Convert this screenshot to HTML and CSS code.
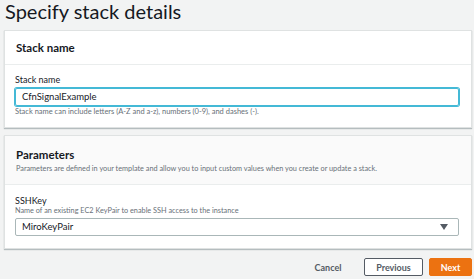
FILE: index.html
```html
<!DOCTYPE html>
<html>
<head>
<meta charset="utf-8">
<link rel="stylesheet" href="styles.css">
</head>
<body>
<h1 class="title">Specify stack details</h1>

<section class="card">
  <div class="card-head">
    <h2 class="card-title">Stack name</h2>
  </div>
  <div class="card-body body-one">
    <div class="label">Stack name</div>
    <div class="input focus">CfnSignalExample</div>
    <div class="hint">Stack name can include letters (A-Z and a-z), numbers (0-9), and dashes (-).</div>
  </div>
</section>

<section class="card card-two">
  <div class="card-head grey">
    <h2 class="card-title">Parameters</h2>
    <div class="hint head-hint">Parameters are defined in your template and allow you to input custom values when you create or update a stack.</div>
  </div>
  <div class="card-body body-two">
    <div class="label">SSHKey</div>
    <div class="hint desc">Name of an existing EC2 KeyPair to enable SSH access to the instance</div>
    <div class="input select">
      <span>MiroKeyPair</span>
      <svg class="caret" width="8" height="6" viewBox="0 0 8 6"><path d="M0 0 H8 L4 6 Z" fill="#545b64"/></svg>
    </div>
  </div>
</section>

<footer class="actions">
  <button class="btn link">Cancel</button>
  <button class="btn secondary">Previous</button>
  <button class="btn primary">Next</button>
</footer>
</body>
</html>
```

FILE: styles.css
```css
* { box-sizing: border-box; }
html, body { margin: 0; padding: 0; }
body {
  background: #f2f3f3;
  font-family: Lato, "Open Sans", sans-serif;
  color: #16191f;
  width: 474px;
  height: 279px;
  overflow: hidden;
}
.title {
  margin: 0;
  padding: 0 0 0 5px;
  font-weight: 400;
  font-size: 20px;
  line-height: 23px;
  height: 30px;
}
.card {
  margin: 0 2px 0 4px;
  background: #fff;
  border: 1px solid #dfe2e2;
  box-shadow: 0 1px 1px rgba(0,28,36,0.25);
}
.card-two { margin-top: 7px; }
.card-head {
  padding: 0 11px;
  border-bottom: 1px solid #eaeded;
  height: 34px;
  display: flex;
  flex-direction: column;
  justify-content: center;
}
.card-head.grey {
  background: #fafafa;
  height: 49px;
  padding-top: 2px;
}
.card-title {
  margin: 0;
  font-size: 11.5px;
  font-weight: 700;
  line-height: 14px;
}
.card-body { padding: 0 12px 0 10px; }
.body-one { padding-top: 9px; padding-bottom: 10px; }
.body-two { padding-top: 10px; padding-bottom: 12px; }
.label {
  font-size: 9px;
  line-height: 11px;
  font-weight: 400;
}
.hint {
  font-size: 7.5px;
  line-height: 10px;
  color: #687078;
}
.head-hint { margin-top: 2px; font-size: 7.3px; }
.body-one .label { margin-bottom: 3px; }
.body-one .hint { margin-top: 1px; }
.desc { margin-bottom: 2px; font-size: 7.3px; }
.input {
  height: 18px;
  border: 1px solid #aab7b8;
  border-radius: 2px;
  font-size: 9.5px;
  line-height: 16px;
  padding: 0 6px;
  display: flex;
  align-items: center;
  justify-content: space-between;
}
.input.focus {
  border-color: #44b9d6;
  box-shadow: 0 0 0 1px #44b9d6;
}
.caret { margin-right: 4px; }
.actions {
  display: flex;
  justify-content: flex-end;
  align-items: center;
  gap: 6px;
  padding: 9px 2px 0 0;
}
.btn {
  font-family: inherit;
  font-size: 9px;
  font-weight: 700;
  height: 18px;
  border-radius: 2px;
  padding: 0;
  border: 1px solid transparent;
  cursor: pointer;
}
.btn.link {
  background: transparent;
  color: #545b64;
  width: 40px;
  margin-right: 10px;
}
.btn.secondary {
  background: #fff;
  border-color: #545b64;
  color: #545b64;
  width: 59px;
}
.btn.primary {
  background: #ec7211;
  border-color: #ec7211;
  color: #fff;
  width: 43px;
}
```
